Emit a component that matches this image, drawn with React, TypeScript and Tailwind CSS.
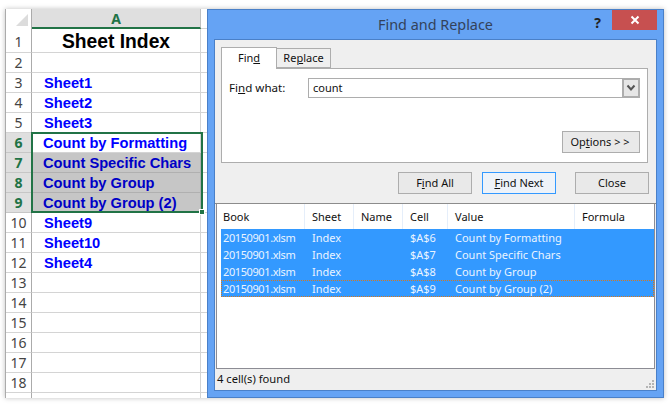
const SHEET_ROWS = [
  { n: 3, text: "Sheet1" },
  { n: 4, text: "Sheet2" },
  { n: 5, text: "Sheet3" },
  { n: 6, text: "Count by Formatting", active: true },
  { n: 7, text: "Count Specific Chars", active: true, sel: true },
  { n: 8, text: "Count by Group", active: true, sel: true },
  { n: 9, text: "Count by Group (2)", active: true, sel: true },
  { n: 10, text: "Sheet9" },
  { n: 11, text: "Sheet10" },
  { n: 12, text: "Sheet4" },
  { n: 13 },
  { n: 14 },
  { n: 15 },
  { n: 16 },
  { n: 17 },
  { n: 18 },
];

const RESULTS = [
  { cell: "$A$6", value: "Count by Formatting" },
  { cell: "$A$7", value: "Count Specific Chars" },
  { cell: "$A$8", value: "Count by Group" },
  { cell: "$A$9", value: "Count by Group (2)", focus: true },
];

function Sheet() {
  return (
    <div className="relative w-[202px] shrink-0 flex flex-col bg-white border-l border-[#ababab] font-['Liberation_Sans',sans-serif]">
      {/* column header */}
      <div className="flex h-[20px] shrink-0">
        <div className="w-[26px] shrink-0 border-r border-[#ababab] flex items-end justify-end pr-[3px] pb-[3px]">
          <div className="w-[12px] h-[12px] bg-[#dcdcdc] [clip-path:polygon(100%_0,100%_100%,0_100%)]" />
        </div>
        <div className="w-[169px] shrink-0 bg-[#dfdfdf] border-b-2 border-r border-b-[#217346] border-r-[#c0c0c0] flex items-center justify-center pt-[1px] text-[14px] font-bold text-[#217346] font-['Noto_Sans',sans-serif]">
          A
        </div>
        <div className="flex-1 border-b border-[#d4d4d4]" />
      </div>

      <div className="flex h-[24px] shrink-0">
        <div className="w-[26px] shrink-0 border-r border-b border-r-[#ababab] border-b-[#d4d4d4] flex items-center justify-center pt-[1px] text-[14px] text-[#444] font-['Noto_Sans',sans-serif]">
          1
        </div>
        <div className="w-[169px] shrink-0 border-r border-b border-[#d4d4d4] flex items-center justify-center pt-[3px] text-[19.3px] font-bold text-black">
          Sheet Index
        </div>
        <div className="flex-1 border-b border-[#d4d4d4]" />
      </div>
      <div className="flex h-[20px] shrink-0">
        <div className="w-[26px] shrink-0 border-r border-b border-r-[#ababab] border-b-[#d4d4d4] flex items-center justify-center text-[14px] text-[#444] font-['Noto_Sans',sans-serif]">
          2
        </div>
        <div className="w-[169px] shrink-0 border-r border-b border-[#d4d4d4]" />
        <div className="flex-1 border-b border-[#d4d4d4]" />
      </div>

      {SHEET_ROWS.map((r) => (
        <div key={r.n} className="flex h-[20px] shrink-0">
          <div
            className={
              r.active
                ? "w-[26px] shrink-0 border-r border-b border-r-[#ababab] border-b-[#c6c6c6] bg-[#dfdfdf] flex items-center justify-center text-[14px] font-bold text-[#217346] font-['Noto_Sans',sans-serif]"
                : "w-[26px] shrink-0 border-r border-b border-r-[#ababab] border-b-[#d4d4d4] flex items-center justify-center text-[14px] text-[#444] font-['Noto_Sans',sans-serif]"
            }
          >
            {r.n}
          </div>
          <div
            className={
              r.sel
                ? "w-[169px] shrink-0 border-r border-b border-[#b0b0b0] bg-[#c6c6c6] flex items-center pl-[11px] pt-[1px] text-[14.67px] font-bold text-[#0000c6]"
                : r.active
                ? "w-[169px] shrink-0 border-r border-b border-[#d4d4d4] flex items-center pl-[11px] pt-[1px] text-[14.67px] font-bold text-[#0000ff]"
                : "w-[169px] shrink-0 border-r border-b border-[#d4d4d4] flex items-center pl-[12px] pt-[1px] text-[14.67px] font-bold text-[#0000ff]"
            }
          >
            {r.text}
          </div>
          <div className="flex-1 border-b border-[#d4d4d4]" />
        </div>
      ))}
      <div className="flex flex-1">
        <div className="w-[26px] shrink-0 border-r border-[#ababab]" />
        <div className="w-[169px] shrink-0 border-r border-[#d4d4d4]" />
      </div>

      {/* selected range */}
      <div className="absolute left-[25px] top-[123px] w-[172px] h-[81px] border-2 border-[#217346]" />
      <div className="absolute left-[193px] top-[200px] w-[6px] h-[6px] bg-[#217346] border border-white" />
    </div>
  );
}

function Dialog() {
  return (
    <div className="w-[457px] shrink-0 flex flex-col bg-[#65a3f4] border border-[#4a80c8] font-['Noto_Sans',sans-serif] text-[11px] text-[#111]">
      {/* title bar */}
      <div className="relative h-[29px] shrink-0 flex items-center justify-center text-[14.4px] text-[#33425a] pt-[1px]">
        Find and Replace
        <span className="absolute right-[62px] top-[2px] text-[14px] font-bold text-[#222]">?</span>
        <div className="absolute right-[6px] top-0 w-[45px] h-[20px] bg-[#c75050] flex items-center justify-center">
          <svg width="10" height="10" viewBox="0 0 10 10">
            <path d="M1.5 1.5L8.5 8.5M8.5 1.5L1.5 8.5" stroke="#fff" strokeWidth="2" />
          </svg>
        </div>
      </div>

      <div className="flex-1 mx-[6px] mb-[6px] flex flex-col bg-[#efefef] border border-[#4a80c8] min-h-0">
        {/* tabs */}
        <div className="flex items-end h-[28px] shrink-0 pl-[6px]">
          <div className="relative z-10 w-[56px] h-[22px] -mb-px bg-white border border-b-0 border-[#adadad] flex items-center justify-center">
            <span>Fin<u>d</u></span>
          </div>
          <div className="w-[55px] h-[20px] -ml-px bg-[#efefef] border border-[#adadad] flex items-center justify-center">
            <span>Re<u>p</u>lace</span>
          </div>
        </div>

        {/* find panel */}
        <div className="h-[95px] shrink-0 ml-[6px] mr-[8px] bg-white border border-[#adadad] flex flex-col pt-[9px] pl-[7px] pr-[7px] pb-[9px]">
          <div className="flex items-center h-[20px]">
            <span className="w-[79px] shrink-0 text-[11.6px]">Fi<u>n</u>d what:</span>
            <div className="flex-1 h-[20px] border border-[#adadad] flex items-center justify-between pl-[4px]">
              <span>count</span>
              <div className="w-[18px] h-[20px] -mr-px bg-[#e6e6e6] border-2 border-[#adadad] flex items-center justify-center">
                <svg width="10" height="8" viewBox="0 0 10 8">
                  <path d="M1.5 1.5L5 5.5L8.5 1.5" fill="none" stroke="#555" strokeWidth="2" />
                </svg>
              </div>
            </div>
          </div>
          <div className="mt-auto self-end w-[78px] h-[22px] bg-[#e9e9e9] border border-[#adadad] flex items-center justify-center pr-[2px]">
            <span>Op<u>t</u>ions &gt; &gt;</span>
          </div>
        </div>

        {/* buttons */}
        <div className="flex justify-end h-[22px] shrink-0 mt-[9px] mr-[7px]">
          <div className="w-[74px] bg-[#e9e9e9] border border-[#adadad] flex items-center justify-center">
            <span>F<u>i</u>nd All</span>
          </div>
          <div className="w-[74px] ml-[10px] bg-[#eef3f9] border border-[#3399ff] flex items-center justify-center">
            <span><u>F</u>ind Next</span>
          </div>
          <div className="w-[74px] ml-[19px] bg-[#e9e9e9] border border-[#adadad] flex items-center justify-center">
            <span>Close</span>
          </div>
        </div>

        {/* results */}
        <div className="flex-1 min-h-0 mt-[9px] border-t border-[#8c8c8c]">
          <div className="h-full mx-px bg-white border-l border-r border-b border-[#8c8c94] pl-[4px] flex flex-col">
            <div className="flex h-[25px] shrink-0">
              <div className="w-[84px] shrink-0 border-r border-[#e5eefa] pl-[2px] pt-[5px]">Book</div>
              <div className="w-[49px] shrink-0 border-r border-[#e5eefa] pl-[7px] pt-[5px]">Sheet</div>
              <div className="w-[49px] shrink-0 border-r border-[#e5eefa] pl-[7px] pt-[5px]">Name</div>
              <div className="w-[45px] shrink-0 border-r border-[#e5eefa] pl-[7px] pt-[5px]">Cell</div>
              <div className="w-[127px] shrink-0 border-r border-[#e5eefa] pl-[7px] pt-[5px]">Value</div>
              <div className="flex-1 pl-[7px] pt-[5px]">Formula</div>
            </div>
            {RESULTS.map((r) => (
              <div
                key={r.cell}
                className={
                  r.focus
                    ? "flex h-[17px] shrink-0 items-center bg-[#3399ff] text-[#eaf4ff] border border-dotted border-[#d9771a]"
                    : "flex h-[17px] shrink-0 items-center bg-[#3399ff] text-[#eaf4ff] border border-transparent"
                }
              >
                <div className="w-[83px] -ml-px shrink-0 pl-[2px] pt-[1px] tracking-[-0.4px]">20150901.xlsm</div>
                <div className="w-[49px] shrink-0 pl-[8px] pt-[1px]">Index</div>
                <div className="w-[49px] shrink-0" />
                <div className="w-[45px] shrink-0 pl-[8px] pt-[1px]">{r.cell}</div>
                <div className="flex-1 pl-[8px] pt-[1px]">{r.value}</div>
              </div>
            ))}
          </div>
        </div>

        {/* status bar */}
        <div className="h-[21px] shrink-0 flex items-center justify-between pl-[2px] pr-px">
          <span className="text-[11.2px]">4 cell(s) found</span>
          <svg width="10" height="10" viewBox="0 0 10 10" className="self-end mb-px">
            <path d="M7 1h2v2H7zM4 4h2v2H4zM7 4h2v2H7zM1 7h2v2H1zM4 7h2v2H4zM7 7h2v2H7z" fill="#b4b4b4" />
          </svg>
        </div>
      </div>
    </div>
  );
}

export default function App() {
  return (
    <div className="w-[670px] h-[405px] bg-white pl-[5px] pt-[9px] overflow-hidden">
      <div className="w-[659px] h-[389px] flex shadow-[0_0_5px_rgba(0,0,0,0.25)]">
        <Sheet />
        <Dialog />
      </div>
    </div>
  );
}
